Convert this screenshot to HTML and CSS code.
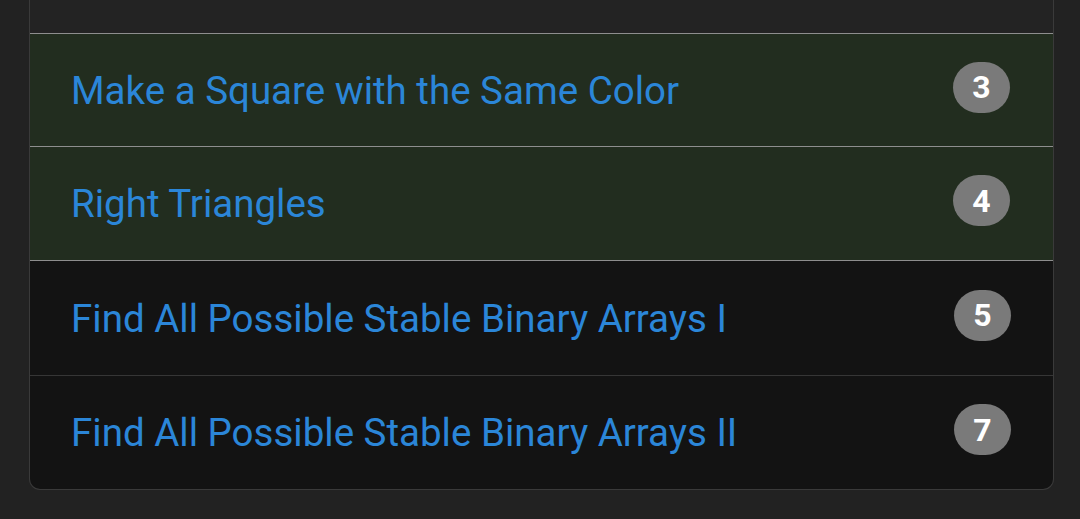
FILE: index.html
```html
<!DOCTYPE html>
<html lang="en">
<head>
    <meta charset="UTF-8">
    <meta name="viewport" content="width=device-width, initial-scale=1.0">
    <title>Problems</title>
    <link rel="stylesheet" href="styles.css">
</head>
<body>
    <div class="card">
        <div class="card-top"></div>
        <ul class="list">
            <li class="item solved"><a href="#">Make a Square with the Same Color</a><span class="badge">3</span></li>
            <li class="item solved"><a href="#">Right Triangles</a><span class="badge">4</span></li>
            <li class="item"><a href="#">Find All Possible Stable Binary Arrays I</a><span class="badge">5</span></li>
            <li class="item last"><a href="#">Find All Possible Stable Binary Arrays II</a><span class="badge">7</span></li>
        </ul>
    </div>
</body>
</html>
```

FILE: styles.css
```css
/* Page background and base font */
body {
  margin: 0;
  background-color: #222222;
  font-family: Roboto, "Liberation Sans", sans-serif;
}

/* Card, scrolled so only its lower part shows */
.card {
  margin-left: 29px;
  width: 1025px;
  box-sizing: border-box;
  border: 1px solid #3a3a3a;
  border-top: none;
  border-radius: 0 0 11px 11px;
  background-color: #131313;
  overflow: hidden;
}

.card-top {
  height: 33px;
  background-color: #232323;
}

.list {
  list-style: none;
  margin: 0;
  padding: 0;
}

/* One row of the list */
.item {
  display: flex;
  align-items: center;
  justify-content: space-between;
  height: 114px;
  box-sizing: border-box;
  padding: 0 42px 0 41px;
  border-top: 1px solid #363636;
}

.item:first-child {
  border-top: none;
}

/* Solved rows get a green tint and a lighter outline */
.item.solved {
  background-color: #222d1f;
  border: 1px solid #8e8e8e;
  margin: 0 -1px;
  padding: 0 43px 0 41px;
}

.item.solved + .item.solved {
  border-top: 1px solid #8e8e8e;
  margin-top: -1px;
  height: 115px;
}

.item.solved + .item:not(.solved) {
  border-top: none;
}

.item a {
  color: #2b86d8;
  text-decoration: none;
  font-size: 38.5px;
}

.badge {
  width: 57px;
  height: 51px;
  margin-bottom: 6px;
  border-radius: 26px;
  background-color: #7a7a7a;
  color: #ffffff;
  font-weight: 700;
  font-size: 32px;
  display: flex;
  align-items: center;
  justify-content: center;
}
```
